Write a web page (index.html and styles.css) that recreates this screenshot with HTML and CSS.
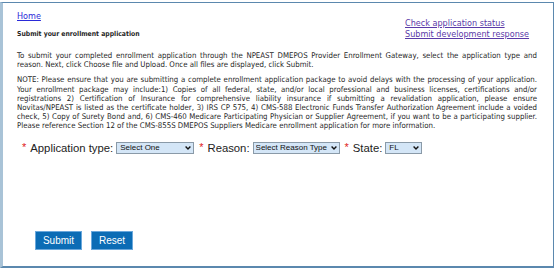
FILE: index.html
```html
<!DOCTYPE html>
<html>
<head>
<meta charset="utf-8">
<link rel="stylesheet" href="styles.css">
</head>
<body>
<div class="frame">
  <div class="header">
    <div class="header-left">
      <a class="home" href="#">Home</a>
      <div class="title">Submit your enrollment application</div>
    </div>
    <div class="header-right">
      <a class="side-link" href="#">Check application status</a>
      <a class="side-link" href="#">Submit development response</a>
    </div>
  </div>
  <p class="intro">To submit your completed enrollment application through the NPEAST DMEPOS Provider Enrollment Gateway, select the application type and reason. Next, click Choose file and Upload. Once all files are displayed, click Submit.</p>
  <p class="note">NOTE: Please ensure that you are submitting a complete enrollment application package to avoid delays with the processing of your application. Your enrollment package may include:1) Copies of all federal, state, and/or local professional and business licenses, certifications and/or registrations 2) Certification of Insurance for comprehensive liability insurance if submitting a revalidation application, please ensure Novitas/NPEAST is listed as the certificate holder, 3) IRS CP 575, 4) CMS-588 Electronic Funds Transfer Authorization Agreement include a voided check, 5) Copy of Surety Bond and, 6) CMS-460 Medicare Participating Physician or Supplier Agreement, if you want to be a participating supplier. Please reference Section 12 of the CMS-855S DMEPOS Suppliers Medicare enrollment application for more information.</p>
  <div class="form-row">
    <span class="req">*</span><label class="lbl">Application type:</label>
    <span class="sel-wrap">
      <select class="sel sel-type"><option>Select One</option></select>
      <svg class="chev" width="6" height="4" viewBox="0 0 6 4"><path d="M0.6 0.6 L3 3 L5.4 0.6" fill="none" stroke="#111" stroke-width="1.4"/></svg>
    </span>
    <span class="req">*</span><label class="lbl">Reason:</label>
    <span class="sel-wrap">
      <select class="sel sel-reason"><option>Select Reason Type</option></select>
      <svg class="chev" width="6" height="4" viewBox="0 0 6 4"><path d="M0.6 0.6 L3 3 L5.4 0.6" fill="none" stroke="#111" stroke-width="1.4"/></svg>
    </span>
    <span class="req">*</span><label class="lbl">State:</label>
    <span class="sel-wrap">
      <select class="sel sel-state"><option>FL</option></select>
      <svg class="chev" width="6" height="4" viewBox="0 0 6 4"><path d="M0.6 0.6 L3 3 L5.4 0.6" fill="none" stroke="#111" stroke-width="1.4"/></svg>
    </span>
  </div>
  <div class="buttons">
    <button class="btn btn-submit">Submit</button>
    <button class="btn btn-reset">Reset</button>
  </div>
</div>
</body>
</html>
```
FILE: styles.css
```css
html, body {
  margin: 0;
  padding: 0;
  background: #ffffff;
}
.frame {
  box-sizing: border-box;
  margin: 2px 2px 0 0;
  width: 554px;
  height: 266px;
  border-top: 1px solid #5b88ae;
  border-right: 1px solid #5b88ae;
  border-bottom: 2px solid #5b88ae;
  border-left: 3px solid #a9c3d7;
  padding: 0 16px 0 14px;
  font-family: "DejaVu Sans Condensed", "DejaVu Sans", sans-serif;
  color: #1f1f1f;
  font-size: 7.8px;
}
.header {
  display: flex;
  justify-content: space-between;
}
.header-left {
  display: flex;
  flex-direction: column;
  padding-top: 8px;
}
.home {
  color: #2a2ad8;
  font-size: 9px;
  line-height: 11px;
}
.title {
  margin-top: 8px;
  font-weight: bold;
  font-size: 6.8px;
  line-height: 9px;
}
.header-right {
  display: flex;
  flex-direction: column;
  padding-top: 15px;
  width: 132px;
  white-space: nowrap;
}
.side-link {
  color: #5a3aa8;
  font-size: 9px;
  line-height: 11px;
}
.intro, .note {
  margin: 0;
  text-align: justify;
  line-height: 9.2px;
}
.intro {
  margin-top: 11px;
}
.note {
  margin-top: 6px;
}
.form-row {
  display: flex;
  align-items: center;
  margin-top: 11px;
  padding-left: 5px;
  font-family: "Liberation Sans", Arial, sans-serif;
}
.req {
  color: #e0201a;
  font-size: 11px;
  margin-right: 4px;
  position: relative;
  top: -1px;
}
.lbl {
  font-size: 11.3px;
  color: #222;
  margin-right: 3px;
}
.sel-wrap {
  position: relative;
  display: inline-flex;
  margin-right: 5px;
}
.sel {
  appearance: none;
  -webkit-appearance: none;
  box-sizing: border-box;
  height: 12px;
  font-family: "Liberation Sans", Arial, sans-serif;
  font-size: 8px;
  line-height: 10px;
  background: #d4e6f7;
  border: 1px solid #8a9aa8;
  border-radius: 0;
  padding: 0 0 0 3px;
  margin: 0;
  color: #111;
}
.chev {
  position: absolute;
  right: 3px;
  top: 4px;
  pointer-events: none;
}
.sel-type { width: 78px; }
.sel-reason { width: 87px; padding-left: 2px; }
.sel-state { width: 37px; }
.buttons {
  display: flex;
  gap: 9px;
  margin-top: 77px;
  padding-left: 18px;
}
.btn {
  box-sizing: border-box;
  height: 19px;
  background: #0b6cb5;
  border: 1px solid #6aa8dc;
  color: #ffffff;
  font-family: "Liberation Sans", Arial, sans-serif;
  font-size: 10px;
  padding: 0;
}
.btn-submit { width: 47px; }
.btn-reset { width: 42px; }
```
